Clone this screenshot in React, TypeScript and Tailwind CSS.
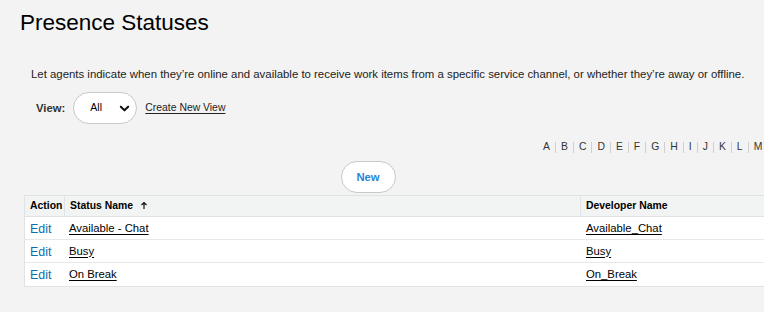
const letters = ['A', 'B', 'C', 'D', 'E', 'F', 'G', 'H', 'I', 'J', 'K', 'L', 'M', 'N', 'O', 'P', 'Q'];

const rows = [
  { name: 'Available - Chat', dev: 'Available_Chat' },
  { name: 'Busy', dev: 'Busy' },
  { name: 'On Break', dev: 'On_Break' },
];

export default function App() {
  return (
    <div className="h-[312px] w-[764px] overflow-hidden bg-[#f3f3f3] font-['Liberation_Sans',Arial,sans-serif] text-[#181818]">
      <h1 className="pl-[20px] pt-[8px] text-[22.5px] leading-[30px] text-black">Presence Statuses</h1>

      <p className="whitespace-nowrap pl-[31px] pt-[29px] text-[11.4px] leading-[14px] text-[#222]">
        Let agents indicate when they’re online and available to receive work items from a specific service channel, or whether they’re away or offline.
      </p>

      <div className="flex items-center pl-[36px] pt-[11px]">
        <span className="text-[11.3px] font-bold text-[#333]">View:</span>
        <div className="ml-[8px] flex h-[32px] w-[64px] items-center justify-between rounded-full border border-[#c9c9c9] bg-white pl-[16px] pr-[6px]">
          <span className="text-[10.5px] text-black">All</span>
          <svg width="11" height="11" viewBox="0 0 12 12" fill="none">
            <path d="M2 4l4 4 4-4" stroke="#111" strokeWidth="2.2" strokeLinecap="round" strokeLinejoin="round" />
          </svg>
        </div>
        <a className="ml-[8px] text-[10.4px] text-[#222] underline underline-offset-2">Create New View</a>
      </div>

      <div className="flex whitespace-nowrap pl-[543px] pt-[16px] text-[10.4px] leading-[14px] text-[#333]">
        {letters.map((l, i) => (
          <span key={l} className="flex items-center">
            {i > 0 && <span className="mx-[5px] h-[11px] w-px bg-[#cfcfcf]" />}
            <span>{l}</span>
          </span>
        ))}
      </div>

      <div className="flex justify-center pr-[30px] pt-[7px]">
        <button className="ml-[2px] h-[32px] w-[55px] rounded-full border border-[#c9c9c9] bg-white text-[11.3px] font-bold text-[#2a84d6]">
          New
        </button>
      </div>

      <div className="ml-[24px] mt-[2px] w-[800px] border border-[#e0e3e5] bg-white">
        <div className="flex h-[21px] items-center border-b border-[#e0e3e5] bg-[#f2f3f3] text-[10.4px] font-bold text-black">
          <div className="flex h-full w-[40px] items-center border-r border-[#e0e3e5] pl-[5px]">Action</div>
          <div className="flex w-[515px] items-center gap-[7px] pl-[5px]">
            Status Name
            <svg width="8" height="9" viewBox="0 0 8 9" fill="none">
              <path d="M4 8V1.5M1.5 4L4 1.5 6.5 4" stroke="#111" strokeWidth="1.2" />
            </svg>
          </div>
          <div className="flex h-full items-center border-l border-[#e0e3e5] pl-[5px]">Developer Name</div>
        </div>
        {rows.map((r, i) => (
          <div
            key={r.dev}
            className={`flex h-[23px] items-center ${i < rows.length - 1 ? 'border-b border-[#e8e8e8]' : ''}`}
          >
            <div className="w-[40px] pl-[5px] pt-[2px] text-[12.4px] text-[#0b6fae]">Edit</div>
            <div className="w-[516px] pl-[4px] text-[11.3px] text-black underline underline-offset-2">{r.name}</div>
            <div className="pl-[5px] text-[11.3px] text-black underline underline-offset-2">{r.dev}</div>
          </div>
        ))}
      </div>
    </div>
  );
}
